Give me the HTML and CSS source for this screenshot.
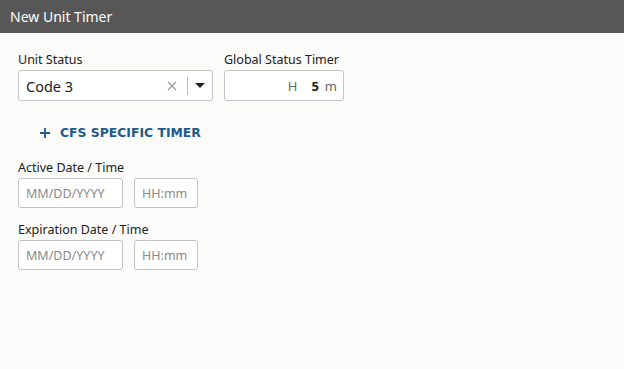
FILE: index.html
```html
<!DOCTYPE html>
<html lang="en">
<head>
    <meta charset="UTF-8">
    <meta name="viewport" content="width=device-width, initial-scale=1.0">
    <title>New Unit Timer</title>
    <link rel="stylesheet" href="styles.css">
</head>
<body>
    <div class="dialog">
        <div class="dialog-header">New Unit Timer</div>
        <div class="dialog-body">
            <div class="row">
                <div class="field">
                    <label>Unit Status</label>
                    <div class="select">
                        <span class="select-value">Code 3</span>
                        <span class="select-clear">
                            <svg width="10" height="10" viewBox="0 0 10 10"><path d="M1 1L9 9M9 1L1 9" stroke="#999" stroke-width="1.1"/></svg>
                        </span>
                        <span class="select-sep"></span>
                        <span class="select-arrow">
                            <svg width="10" height="6" viewBox="0 0 10 6"><path d="M0 0H10L5 5Z" fill="#222"/></svg>
                        </span>
                    </div>
                </div>
                <div class="field">
                    <label>Global Status Timer</label>
                    <div class="timer">
                        <span class="unit">H</span>
                        <span class="num">5</span>
                        <span class="unit">m</span>
                    </div>
                </div>
            </div>

            <button class="add-timer">
                <svg width="10" height="10" viewBox="0 0 10 10"><path d="M5 0V10M0 5H10" stroke="#1d5a8c" stroke-width="1.8"/></svg>
                CFS SPECIFIC TIMER
            </button>

            <div class="field">
                <label>Active Date / Time</label>
                <div class="datetime">
                    <input class="date" type="text" placeholder="MM/DD/YYYY">
                    <input class="time" type="text" placeholder="HH:mm">
                </div>
            </div>

            <div class="field">
                <label>Expiration Date / Time</label>
                <div class="datetime">
                    <input class="date" type="text" placeholder="MM/DD/YYYY">
                    <input class="time" type="text" placeholder="HH:mm">
                </div>
            </div>
        </div>
    </div>
</body>
</html>
```

FILE: styles.css
```css
body {
    margin: 0;
    font-family: "Noto Sans", "Open Sans", sans-serif;
    background-color: #fbfbf9;
    color: #222;
}

.dialog-header {
    height: 33px;
    line-height: 34px;
    padding-left: 10px;
    background-color: #575757;
    color: #ffffff;
    font-size: 14px;
}

.dialog-body {
    padding: 19px 18px;
}

.row {
    display: flex;
    gap: 11px;
}

.field {
    display: flex;
    flex-direction: column;
    margin-bottom: 14px;
}

.row .field {
    margin-bottom: 0;
}

label {
    font-size: 12.5px;
    line-height: 16px;
    margin-bottom: 2px;
}

.select {
    display: flex;
    align-items: center;
    width: 195px;
    height: 31px;
    box-sizing: border-box;
    border: 1px solid #c4c4c4;
    border-radius: 3px;
    background-color: #ffffff;
    padding: 0 7px 0 7px;
}

.select-value {
    flex: 1;
    font-size: 14.5px;
}

.select-clear {
    display: flex;
    margin-right: 10px;
}

.select-sep {
    width: 1px;
    height: 18px;
    background-color: #bbb;
    margin-right: 7px;
}

.select-arrow {
    display: flex;
}

.timer {
    display: flex;
    align-items: center;
    justify-content: flex-end;
    width: 120px;
    height: 31px;
    box-sizing: border-box;
    border: 1px solid #c4c4c4;
    border-radius: 3px;
    background-color: #ffffff;
    padding-right: 6px;
    font-size: 13px;
}

.timer .unit {
    color: #666;
}

.timer .num {
    font-weight: bold;
    margin: 0 6px 0 14px;
}

.add-timer {
    display: flex;
    align-items: center;
    gap: 10px;
    background: none;
    border: none;
    padding: 0;
    margin: 24px 0 20px 22px;
    font-family: "DejaVu Sans", sans-serif;
    font-size: 12.4px;
    font-weight: bold;
    color: #1d5a8c;
    cursor: pointer;
}

.datetime {
    display: flex;
    gap: 11px;
}

input {
    height: 30px;
    box-sizing: border-box;
    border: 1px solid #c4c4c4;
    border-radius: 3px;
    background-color: #ffffff;
    padding: 0 7px;
    font-family: inherit;
    font-size: 12.5px;
}

input::placeholder {
    color: #8a8a8a;
}

input.date {
    width: 105px;
}

input.time {
    width: 64px;
}
```
